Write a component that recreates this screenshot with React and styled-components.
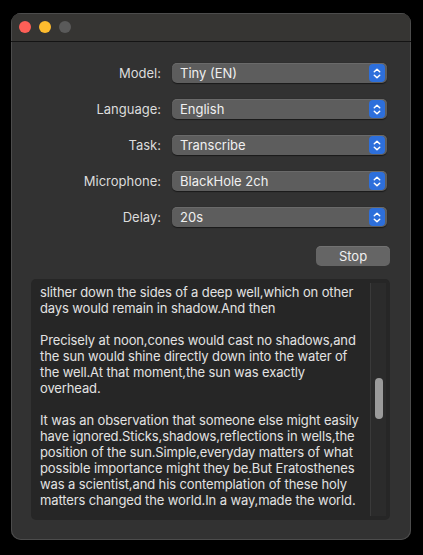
import React from "react";
import styled, { createGlobalStyle } from "styled-components";

const Global = createGlobalStyle`
  html, body { margin: 0; padding: 0; background: #000; }
  body { font-family: Inter, "Noto Sans", "Liberation Sans", sans-serif; -webkit-font-smoothing: antialiased; }
`;

const Page = styled.div`
  padding: 13px 0 0 11px;
  width: 423px;
  height: 555px;
  box-sizing: border-box;
`;

const Window = styled.div`
  width: 400px;
  height: 527px;
  border-radius: 10px;
  background: #323232;
  box-shadow: inset 0 0 0 1px #4c4c4c;
  overflow: hidden;
  display: flex;
  flex-direction: column;
`;

const TitleBar = styled.div`
  height: 28px;
  flex: none;
  background: #363533;
  border-bottom: 1px solid #141414;
  display: flex;
  align-items: center;
  gap: 8px;
  padding-left: 8px;
  box-shadow: inset 0 1px 0 #4c4c4c, inset 1px 0 0 #4c4c4c, inset -1px 0 0 #4c4c4c;
`;

const Light = styled.span`
  width: 12px;
  height: 12px;
  border-radius: 50%;
  background: ${(p) => p.$color};
`;

const Body = styled.div`
  flex: 1;
  display: flex;
  flex-direction: column;
  padding: 21px 21px 20px 20px;
  min-height: 0;
`;

const Form = styled.div`
  display: grid;
  grid-template-columns: 130px 215px;
  column-gap: 11px;
  row-gap: 16px;
  align-items: center;
`;

const Label = styled.label`
  text-align: right;
  color: #dcdcdc;
  font-size: 13px;
  line-height: 20px;
`;

const Select = styled.div`
  height: 20px;
  box-sizing: border-box;
  background: #5d5d5d;
  border-radius: 5px;
  box-shadow: inset 0 1px 0 #6a6a6a, 0 0.5px 1px rgba(0,0,0,0.5);
  display: flex;
  align-items: center;
  justify-content: space-between;
  padding: 0 2px 0 8px;
  color: #f0f0f0;
  font-size: 13px;
`;

const Stepper = styled.span`
  width: 16px;
  height: 18px;
  border-radius: 4px;
  background: #2d6fdb;
  display: flex;
  align-items: center;
  justify-content: center;
`;

const ButtonRow = styled.div`
  display: flex;
  justify-content: flex-end;
  margin-top: 19px;
`;

const Button = styled.button`
  width: 74px;
  height: 20px;
  border: none;
  border-radius: 5px;
  background: #656565;
  box-shadow: inset 0 1px 0 #727272;
  color: #f0f0f0;
  font-family: inherit;
  font-size: 13px;
  padding: 0;
`;

const TextArea = styled.div`
  margin-top: 13px;
  flex: 1;
  background: #262626;
  border-radius: 5px;
  display: flex;
  overflow: hidden;
  min-height: 0;
`;

const TextContent = styled.div`
  flex: 1;
  padding: 5px 0 0 9px;
  color: #e2e2e2;
  font-size: 13px;
  line-height: 16px;
  letter-spacing: -0.12px;
  overflow: hidden;
`;

const Line = styled.div`
  white-space: nowrap;
  height: 16px;
`;

const Track = styled.div`
  width: 15px;
  margin: 4px 4px 4px 0;
  background: #2b2b2b;
  border-left: 1px solid #3a3a3a;
  display: flex;
  flex-direction: column;
  padding-top: 95px;
  align-items: center;
`;

const Thumb = styled.div`
  width: 8px;
  height: 41px;
  border-radius: 4px;
  background: #9b9b9b;
`;

const Chevrons = () => (
  <svg width="10" height="13" viewBox="0 0 10 13" fill="none">
    <path d="M2.3 4.8 L5 2.2 L7.7 4.8" stroke="#fff" strokeWidth="1.5" strokeLinecap="round" strokeLinejoin="round" />
    <path d="M2.3 8.2 L5 10.8 L7.7 8.2" stroke="#fff" strokeWidth="1.5" strokeLinecap="round" strokeLinejoin="round" />
  </svg>
);

const fields = [
  ["Model:", "Tiny (EN)"],
  ["Language:", "English"],
  ["Task:", "Transcribe"],
  ["Microphone:", "BlackHole 2ch"],
  ["Delay:", "20s"],
];

const lines = [
  "slither down the sides of a deep well,which on other",
  "days would remain in shadow.And then",
  "",
  "Precisely at noon,cones would cast no shadows,and",
  "the sun would shine directly down into the water of",
  "the well.At that moment,the sun was exactly",
  "overhead.",
  "",
  "It was an observation that someone else might easily",
  "have ignored.Sticks,shadows,reflections in wells,the",
  "position of the sun.Simple,everyday matters of what",
  "possible importance might they be.But Eratosthenes",
  "was a scientist,and his contemplation of these holy",
  "matters changed the world.In a way,made the world.",
];

export default function App() {
  return (
    <Page>
      <Global />
      <Window>
        <TitleBar>
          <Light $color="#fe5f57" />
          <Light $color="#febc2e" />
          <Light $color="#5a5a5a" />
        </TitleBar>
        <Body>
          <Form>
            {fields.map(([l, v]) => (
              <React.Fragment key={l}>
                <Label>{l}</Label>
                <Select>
                  <span>{v}</span>
                  <Stepper>
                    <Chevrons />
                  </Stepper>
                </Select>
              </React.Fragment>
            ))}
          </Form>
          <ButtonRow>
            <Button>Stop</Button>
          </ButtonRow>
          <TextArea>
            <TextContent>
              {lines.map((t, i) => (
                <Line key={i}>{t}</Line>
              ))}
            </TextContent>
            <Track>
              <Thumb />
            </Track>
          </TextArea>
        </Body>
      </Window>
    </Page>
  );
}
